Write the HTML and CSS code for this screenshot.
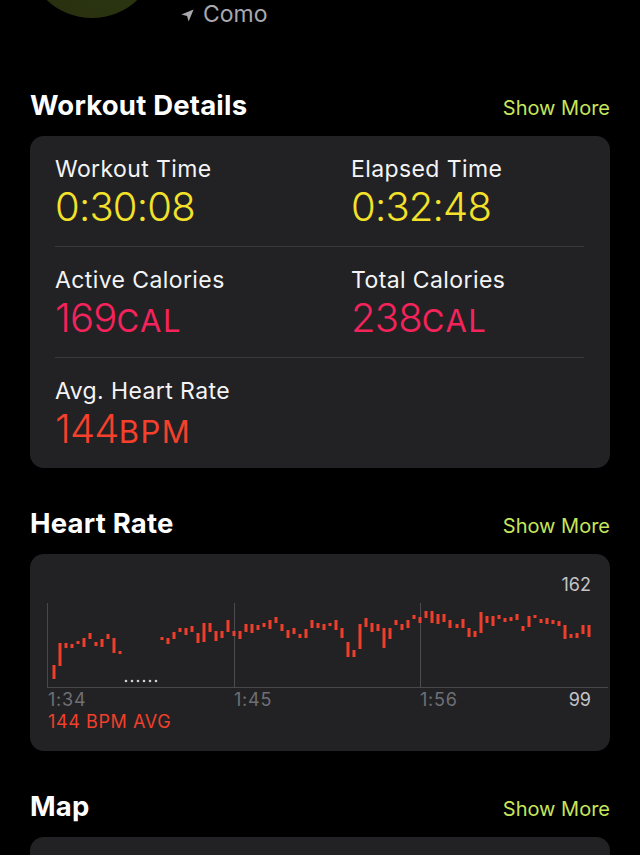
FILE: index.html
```html
<!DOCTYPE html>
<html lang="en">
<head>
<meta charset="utf-8">
<title>Workout Summary</title>
<link rel="stylesheet" href="styles.css">
</head>
<body>
<div class="page">
  <header class="summary">
    <div class="ring"></div>
    <div class="summary-text">
      <div class="location">
        <svg class="loc-icon" width="13" height="13" viewBox="0 0 13 13" aria-hidden="true"><path d="M12.6 0.4 L0.4 5.4 L6.1 6.9 L7.6 12.6 Z" fill="#a8a8ad"/></svg>
        <span>Como</span>
      </div>
    </div>
  </header>

  <section class="section first">
    <div class="section-head">
      <h2>Workout Details</h2>
      <span class="more">Show More</span>
    </div>
    <div class="card details">
      <div class="metric">
        <div class="label">Workout Time</div>
        <div class="value yellow">0:30:08</div>
      </div>
      <div class="metric">
        <div class="label">Elapsed Time</div>
        <div class="value yellow">0:32:48</div>
      </div>
      <div class="metric">
        <div class="label">Active Calories</div>
        <div class="value pink">169<span class="unit">CAL</span></div>
      </div>
      <div class="metric">
        <div class="label">Total Calories</div>
        <div class="value pink">238<span class="unit">CAL</span></div>
      </div>
      <div class="metric last">
        <div class="label">Avg. Heart Rate</div>
        <div class="value red">144<span class="unit">BPM</span></div>
      </div>
    </div>
  </section>

  <section class="section">
    <div class="section-head">
      <h2>Heart Rate</h2>
      <span class="more">Show More</span>
    </div>
    <div class="card chart-card">
      <svg class="chart" width="580" height="157" viewBox="0 0 580 157">
        <text x="561" y="37" text-anchor="end" class="ax-hi">162</text>
        <line x1="17.5" y1="49" x2="17.5" y2="133.5" class="axis"/>
        <line x1="17" y1="133.5" x2="578" y2="133.5" class="axis"/>
        <line x1="204.5" y1="49" x2="204.5" y2="133" class="grid"/>
        <line x1="390.5" y1="49" x2="390.5" y2="133" class="grid"/>
        <path class="bars" d="M24 111V125M30 89V112M36 89V94M42 90V94M48 87V90M54 84V93M60 79V85M66 88V92M72 85V93M78 80V85M84 84V99M90 97V100M132 83V86M138 84V90M144 78V85M150 74V78M156 74V81M162 72V78M168 79V89M174 69V88M180 69V78M186 77V87M192 77V84M198 66V78M204 77V82M210 77V85M216 70V78M222 70V79M228 71V76M234 69V73M240 66V75M246 63V69M252 70V77M258 76V84M264 74V80M270 80V84M276 75V84M282 66V74M288 69V74M294 70V76M300 69V72M306 66V76M312 74V84M318 88V103M324 96V103M330 70V95M336 64V73M342 69V78M348 70V77M354 74V94M360 74V85M366 66V71M372 70V76M378 66V74M384 61V65M390 63V69M396 57V64M402 57V69M408 60V70M414 60V68M420 66V74M427 70V74M433 65V74M439 74V83M445 77V83M451 58V79M457 62V69M463 62V72M469 61V65M475 64V68M481 63V67M487 60V66M493 72V77M499 62V73M505 61V64M511 65V69M517 64V70M523 66V70M529 67V72M535 71V85M541 80V84M547 79V84M553 71V80M559 71V83"/>
        <g class="dots">
          <circle cx="96" cy="127" r="1.3"/><circle cx="102" cy="127" r="1.3"/><circle cx="108" cy="127" r="1.3"/><circle cx="114" cy="127" r="1.3"/><circle cx="120" cy="127" r="1.3"/><circle cx="126" cy="127" r="1.3"/>
        </g>
        <text x="18" y="151.5" class="ax-time">1:34</text>
        <text x="204" y="151.5" class="ax-time">1:45</text>
        <text x="390" y="151.5" class="ax-time">1:56</text>
        <text x="561" y="151.5" text-anchor="end" class="ax-hi">99</text>
      </svg>
      <div class="avg">144 BPM AVG</div>
    </div>
  </section>

  <section class="section">
    <div class="section-head">
      <h2>Map</h2>
      <span class="more">Show More</span>
    </div>
    <div class="card map-card"></div>
  </section>
</div>
</body>
</html>
```

FILE: styles.css
```css
* { box-sizing: border-box; }

html, body {
  margin: 0;
  padding: 0;
  background: #000;
}

body {
  font-family: Inter, "Noto Sans", "Liberation Sans", sans-serif;
  color: #f2f2f4;
  overflow: hidden;
}

.page {
  width: 640px;
  padding: 0 30px;
}

/* top summary (scrolled partly off screen) */
.summary {
  display: flex;
  margin-top: -114px;
}

.ring {
  width: 132px;
  height: 132px;
  margin-left: -4px;
  margin-bottom: 10px;
  border-radius: 50%;
  background: radial-gradient(circle at 65% 60%, #2f3911 0%, #28300f 60%, #222a0c 100%);
  flex: none;
}

.summary-text {
  margin-left: 23px;
  display: flex;
  flex-direction: column;
  justify-content: flex-end;
}

.location {
  display: flex;
  align-items: center;
  gap: 9px;
  font-size: 23px;
  line-height: 28px;
  color: #a8a8ad;
}

.loc-icon {
  display: block;
  margin-top: 3px;
}

/* sections */
.section {
  margin-top: 39px;
}

.section.first {
  margin-top: 61px;
}

.section-head {
  display: flex;
  justify-content: space-between;
  align-items: baseline;
  height: 32px;
  margin-bottom: 15px;
}

.section-head h2 {
  margin: 0;
  font-size: 27.5px;
  line-height: 32px;
  font-weight: 700;
  color: #fff;
  letter-spacing: 0.2px;
}

.more {
  font-size: 20px;
  line-height: 32px;
  color: #c6e55a;
}

.card {
  background: #222224;
  border-radius: 14px;
}

/* details card */
.details {
  display: grid;
  grid-template-columns: 296px 1fr;
  padding: 0 26px 0 25px;
}

.metric {
  padding: 20px 0 17px;
  border-bottom: 1px solid #3a3a3d;
}

.metric.last {
  border-bottom: none;
}

.label {
  font-size: 23px;
  line-height: 26px;
  letter-spacing: 0.4px;
  color: #f4f4f6;
}

.value {
  margin-top: 3px;
  font-size: 40px;
  line-height: 44px;
  font-weight: 300;
  letter-spacing: -0.8px;
}

.unit {
  font-size: 31px;
  line-height: 1;
  letter-spacing: 1.5px;
  font-weight: 400;
}

.yellow { color: #f4e22a; }
.pink { color: #f5235b; }
.red { color: #f5402c; }

/* heart rate chart */
.chart-card {
  padding-bottom: 18px;
}

.chart {
  display: block;
}

.axis {
  stroke: #48484b;
  stroke-width: 1;
}

.grid {
  stroke: #4c4c50;
  stroke-width: 1;
}

.bars {
  stroke: #ef3e2b;
  stroke-width: 3;
  fill: none;
}

.dots circle {
  fill: #cfcfd2;
}

.ax-hi {
  font-family: Inter, "Noto Sans", sans-serif;
  font-size: 18px;
  fill: #c4c4c8;
}

.ax-time {
  font-family: Inter, "Noto Sans", sans-serif;
  font-size: 18px;
  letter-spacing: 0.8px;
  fill: #6f6f74;
}

.avg {
  padding-left: 18px;
  font-size: 18px;
  line-height: 22px;
  letter-spacing: 0.6px;
  color: #f03f2b;
}

/* map */
.map-card {
  height: 200px;
}
```
